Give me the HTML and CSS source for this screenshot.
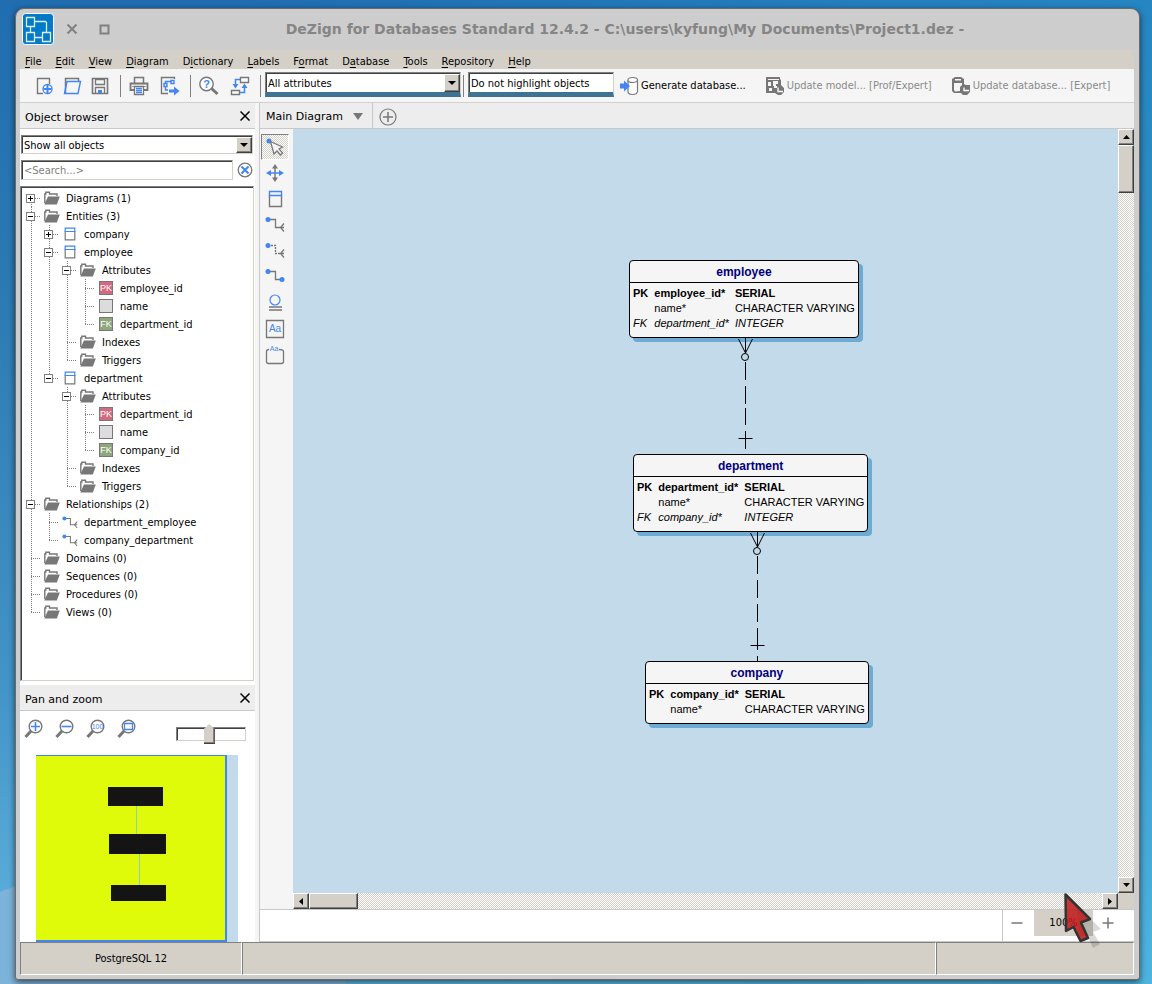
FILE: index.html
```
<!DOCTYPE html>
<html lang="en">
<head>
  <meta charset="UTF-8">
  <title>DeZign for Databases</title>
  <link rel="stylesheet" href="styles.css">
</head>
<body>
  <!-- shared icons -->
  <svg class="defs" width="0" height="0">
    <symbol id="folder" viewBox="0 0 16 14">
      <path d="M.8 12V3H1.800V1.200H5.500V3H13V5" fill="none" stroke="#777" stroke-width="1.400"/>
      <path d="M4 5.500H15.800L12.800 13.500H.3z" fill="#777"/>
    </symbol>
    <symbol id="entity" viewBox="0 0 12 14">
      <path d="M1.200 4V12.800H10.800V4" fill="none" stroke="#777" stroke-width="1.200"/>
      <path d="M1.200 1.200H10.800V4.500H1.200z" fill="#fff" stroke="#4285f4" stroke-width="1.200"/>
    </symbol>
    <symbol id="relation" viewBox="0 0 20 16">
      <path d="M3 3.500H10.500V11.500H16M19 7.500L15.500 11.500L19 15.500M16 11.500H19" fill="none" stroke="#777" stroke-width="1.300"/>
      <circle cx="3" cy="3.500" r="2.500" fill="#4285f4"/>
    </symbol>
    <symbol id="lens" viewBox="0 0 20 20">
      <path d="M7.500 11.500L1.500 18" stroke="#777" stroke-width="3"/>
      <circle cx="11.500" cy="7.500" r="6.300" fill="#fff" stroke="#777" stroke-width="1.400"/>
    </symbol>
  </svg>

  <div class="window">
    <header class="titlebar">
      <svg class="app-logo" width="32" height="32" viewBox="0 0 32 32">
        <rect x=".5" y=".5" width="31" height="31" rx="3" fill="#0479c8" stroke="#fff"/>
        <g fill="none" stroke="#d9ecf8" stroke-width="1.300">
          <path d="M4.500 4.500h8v9h-8zM4.500 19.500h8v9h-8zM20.500 19.500h8v9h-8zM12.500 8.500h11l1 1v10M8.500 13.500v6M12.500 24.500h8"/>
        </g>
      </svg>
      <button class="win-btn" aria-label="Close"><svg width="12" height="12"><path d="M1.500 1.500L10.500 10.500M10.500 1.500L1.500 10.500" stroke="#808080" stroke-width="2"/></svg></button>
      <button class="win-btn" aria-label="Maximize"><svg width="12" height="12"><path d="M2.500 2.500H10.500V10.500H2.500z" fill="none" stroke="#808080" stroke-width="2"/></svg></button>
      <h1>DeZign for Databases Standard 12.4.2 - C:\users\kyfung\My Documents\Project1.dez -</h1>
    </header>

    <div class="client">
      <nav class="menubar">
        <button><u>F</u>ile</button>
        <button><u>E</u>dit</button>
        <button><u>V</u>iew</button>
        <button><u>D</u>iagram</button>
        <button>D<u>i</u>ctionary</button>
        <button><u>L</u>abels</button>
        <button>F<u>o</u>rmat</button>
        <button>D<u>a</u>tabase</button>
        <button><u>T</u>ools</button>
        <button><u>R</u>epository</button>
        <button><u>H</u>elp</button>
      </nav>

      <div class="toolbar">
        <button class="tool" aria-label="New">
          <svg width="20" height="20" fill="none"><path d="M9 17.500H3.500V2.500H15.500V8" stroke="#777" stroke-width="1.400"/><circle cx="13.500" cy="13" r="4.500" fill="#fff" stroke="#4285f4" stroke-width="1.300"/><path d="M13.500 9V17M9.500 13H17.500" stroke="#4285f4" stroke-width="2"/></svg>
        </button>
        <button class="tool" aria-label="Open">
          <svg width="20" height="20" fill="none"><path d="M3.500 17V2.500H16.500V5" stroke="#777" stroke-width="1.500"/><path d="M5 5.500H18.500L16 17.500H2.500z" stroke="#4285f4" stroke-width="1.400"/></svg>
        </button>
        <button class="tool" aria-label="Save">
          <svg width="20" height="20" fill="none"><path d="M2.500 2.500H17.500V17.500H2.500z" stroke="#777" stroke-width="1.600"/><path d="M5.500 3.500H14.500V8.500H5.500zM5.500 17V11.500H14.500V17" stroke="#777" stroke-width="1.300"/><path d="M8 14H12V17H8z" fill="#4285f4"/></svg>
        </button>
        <span class="divider"></span>
        <button class="tool" aria-label="Print">
          <svg width="20" height="20" fill="none"><path d="M5.500 7V1.500H14.500V7" stroke="#777" stroke-width="1.500"/><path d="M5 14H1.500V7.500H18.500V14H15" stroke="#777" stroke-width="1.800"/><path d="M3 10.500H17" stroke="#999"/><path d="M5.500 10.500H14.500V18.500H5.500z" fill="#fff" stroke="#777" stroke-width="1.300"/><path d="M7 12.500H13M7 14.500H13M7 16.500H13" stroke="#4285f4" stroke-width="1.300"/></svg>
        </button>
        <button class="tool wide" aria-label="Export">
          <svg width="20" height="20" fill="none"><path d="M8 17.500H1.500V1.500H14.500V3" stroke="#777" stroke-width="1.400"/><path d="M4 7.500h3v3h-3zM11 4.500h3v3h-3zM5.500 7V5.500H10.500M5.500 11V14H8" stroke="#4285f4" stroke-width="1.400"/><path d="M9 13.500H14V10.500L19.500 15L14 19.500V16.500H9z" fill="#4285f4"/></svg>
        </button>
        <span class="divider"></span>
        <button class="tool" aria-label="Find">
          <svg width="20" height="20" fill="none"><path d="M12 12L18.500 18" stroke="#777" stroke-width="3"/><circle cx="7.500" cy="8" r="6.700" fill="#fff" stroke="#777" stroke-width="1.400"/><text x="7.500" y="12" class="icon-text bold">?</text></svg>
        </button>
        <button class="tool wide" aria-label="Arrange">
          <svg width="20" height="20" fill="none"><path d="M10.500 1.500H18.500V6.500H10.500zM1.500 14.500H9.500V18.500H1.500z" fill="#fff" stroke="#777" stroke-width="1.400"/><path d="M10 3.500H5.500V9M10 16.500H14.500V11" stroke="#4285f4" stroke-width="1.500"/><path d="M2.500 8H8.500L5.500 12.500zM11.500 12H17.500L14.500 7.500z" fill="#4285f4"/></svg>
        </button>
        <span class="divider narrow"></span>
        <div class="combo combo-attrs">
          <select aria-label="Display level"><option>All attributes</option></select>
          <span class="drop"></span>
        </div>
        <span class="divider narrow"></span>
        <div class="combo combo-highlight">
          <select aria-label="Highlight"><option>Do not highlight objects</option></select>
        </div>
        <button class="action">
          <svg width="20" height="20" fill="none"><path d="M9 4V15.500Q9 18.500 13.500 18.500T18.500 15.500V4" fill="#fff" stroke="#777" stroke-width="1.200"/><ellipse cx="13.700" cy="4" rx="4.800" ry="2.500" fill="#fff" stroke="#777" stroke-width="1.200"/><path d="M1 7.500H5V4.500L11 10L5 15.500V12.500H1z" fill="#4285f4"/></svg>
          Generate database...
        </button>
        <button class="action" disabled>
          <svg width="20" height="20"><path d="M1 1H15V3L16 4V9L19 12V16L16 19H13L10 17H1z" fill="#777"/><path d="M3 3H14V4H3zM3 6h3v4h-3zM8 5h5v3h-2v2h-3zM4 12h3v3h-3zM9 10h3v2h-3z" fill="#f5f5f5"/><path d="M18 15.500H13V11.500" fill="none" stroke="#fff" stroke-width="1.300"/></svg>
          Update model... [Prof/Expert]
        </button>
        <button class="action" disabled>
          <svg width="20" height="20"><path d="M1 3L4 1H10L13 3V8L15 9H19V16L16 19H12L10 17H3L1 15z" fill="#777"/><path d="M4 3H10V4.500H4zM3 7H11V9L9 11V15L4 15.500L3 14z" fill="#f5f5f5"/><path d="M18 14.500H13V11.500" fill="none" stroke="#fff" stroke-width="1.300"/></svg>
          Update database... [Expert]
        </button>
      </div>

      <div class="workspace">
        <aside class="sidebar">
          <div class="panel-head">
            <h2>Object browser</h2>
            <button aria-label="Close panel"><svg width="10" height="10"><path d="M.5 .5L9.500 9.500M9.500 .5L.5 9.500" stroke="#000" stroke-width="1.500"/></svg></button>
          </div>
          <div class="filters">
            <div class="combo combo-objects">
              <select aria-label="Object filter"><option>Show all objects</option></select>
              <span class="drop"></span>
            </div>
            <div class="search">
              <input type="text" placeholder="&lt;Search...&gt;" aria-label="Search">
              <button aria-label="Clear search"><svg width="16" height="16"><circle cx="8" cy="8" r="6.800" fill="#fff" stroke="#777" stroke-width="1.300"/><path d="M4.500 4.500L11.500 11.500M11.500 4.500L4.500 11.500" stroke="#4285f4" stroke-width="2"/></svg></button>
            </div>
          </div>

          <ul class="tree">
            <li><div class="row"><button class="toggle plus" aria-label="Expand"></button><svg class="ico"><use href="#folder"/></svg>Diagrams (1)</div></li>
            <li>
              <div class="row"><button class="toggle" aria-label="Collapse"></button><svg class="ico"><use href="#folder"/></svg>Entities (3)</div>
              <ul>
                <li><div class="row"><button class="toggle plus" aria-label="Expand"></button><svg class="ico"><use href="#entity"/></svg>company</div></li>
                <li>
                  <div class="row"><button class="toggle" aria-label="Collapse"></button><svg class="ico"><use href="#entity"/></svg>employee</div>
                  <ul>
                    <li>
                      <div class="row"><button class="toggle" aria-label="Collapse"></button><svg class="ico"><use href="#folder"/></svg>Attributes</div>
                      <ul>
                        <li><div class="row leaf"><span class="key pk">PK</span>employee_id</div></li>
                        <li><div class="row leaf"><span class="key"></span>name</div></li>
                        <li><div class="row leaf"><span class="key fk">FK</span>department_id</div></li>
                      </ul>
                    </li>
                    <li><div class="row leaf"><svg class="ico"><use href="#folder"/></svg>Indexes</div></li>
                    <li><div class="row leaf"><svg class="ico"><use href="#folder"/></svg>Triggers</div></li>
                  </ul>
                </li>
                <li>
                  <div class="row"><button class="toggle" aria-label="Collapse"></button><svg class="ico"><use href="#entity"/></svg>department</div>
                  <ul>
                    <li>
                      <div class="row"><button class="toggle" aria-label="Collapse"></button><svg class="ico"><use href="#folder"/></svg>Attributes</div>
                      <ul>
                        <li><div class="row leaf"><span class="key pk">PK</span>department_id</div></li>
                        <li><div class="row leaf"><span class="key"></span>name</div></li>
                        <li><div class="row leaf"><span class="key fk">FK</span>company_id</div></li>
                      </ul>
                    </li>
                    <li><div class="row leaf"><svg class="ico"><use href="#folder"/></svg>Indexes</div></li>
                    <li><div class="row leaf"><svg class="ico"><use href="#folder"/></svg>Triggers</div></li>
                  </ul>
                </li>
              </ul>
            </li>
            <li>
              <div class="row"><button class="toggle" aria-label="Collapse"></button><svg class="ico"><use href="#folder"/></svg>Relationships (2)</div>
              <ul>
                <li><div class="row leaf"><svg class="ico"><use href="#relation"/></svg>department_employee</div></li>
                <li><div class="row leaf"><svg class="ico"><use href="#relation"/></svg>company_department</div></li>
              </ul>
            </li>
            <li><div class="row leaf"><svg class="ico"><use href="#folder"/></svg>Domains (0)</div></li>
            <li><div class="row leaf"><svg class="ico"><use href="#folder"/></svg>Sequences (0)</div></li>
            <li><div class="row leaf"><svg class="ico"><use href="#folder"/></svg>Procedures (0)</div></li>
            <li><div class="row leaf"><svg class="ico"><use href="#folder"/></svg>Views (0)</div></li>
          </ul>

          <div class="panel-head">
            <h2>Pan and zoom</h2>
            <button aria-label="Close panel"><svg width="10" height="10"><path d="M.5 .5L9.500 9.500M9.500 .5L.5 9.500" stroke="#000" stroke-width="1.500"/></svg></button>
          </div>
          <div class="zoom-tools">
            <button aria-label="Zoom in"><svg width="20" height="20"><use href="#lens"/><path d="M7 7.500H16M11.500 3V12" stroke="#4285f4" stroke-width="1.600"/></svg></button>
            <button aria-label="Zoom out"><svg width="20" height="20"><use href="#lens"/><path d="M6.500 7.500H16.500" stroke="#4285f4" stroke-width="1.600"/></svg></button>
            <button aria-label="Zoom 100%"><svg width="20" height="20"><use href="#lens"/><text x="11.500" y="10" class="icon-text tiny">100</text></svg></button>
            <button aria-label="Fit"><svg width="20" height="20"><use href="#lens"/><path d="M7.500 4.500H15.500V10.500H7.500z" fill="none" stroke="#4285f4" stroke-width="1.300"/></svg></button>
            <input type="range" min="0" max="100" value="47" aria-label="Zoom level">
          </div>
          <div class="minimap">
            <svg viewBox="0 0 202 187" preserveAspectRatio="none">
              <rect width="202" height="187" fill="#c3daea"/>
              <rect width="191" height="187" fill="#4285f4"/>
              <rect y="1" width="189" height="184" fill="#e0fb09"/>
              <path d="M100.500 50V80M103.500 98V131" stroke="#8fcbc4"/>
              <path d="M72 32h55v19H72zM73 79h57v20H73zM75 130h55v16H75z" fill="#141414"/>
            </svg>
          </div>
        </aside>

        <main class="main">
          <div class="tabs">
            <button class="tab">Main Diagram <span class="caret"></span></button>
            <button class="add-tab" aria-label="Add diagram"><svg width="18" height="18"><circle cx="9" cy="9" r="8" fill="none" stroke="#777" stroke-width="1.200"/><path d="M4 9H14M9 4V14" stroke="#777" stroke-width="1.500"/></svg></button>
          </div>

          <div class="editor">
            <div class="palette">
              <button class="active" aria-label="Select"><svg width="20" height="20"><circle cx="4" cy="4" r="2.500" fill="#4285f4"/><path d="M5.500 4.500L17.500 10L14 12L17.500 16L15.500 18L12 14L9 17z" fill="#f5f5f5" stroke="#777" stroke-width="1.200"/></svg></button>
              <button aria-label="Pan"><svg width="20" height="20"><path d="M10 3V17" stroke="#777" stroke-width="1.500"/><path d="M7 5.500L10 1L13 5.500zM7 14.500L10 19L13 14.500z" fill="#777"/><path d="M3 10H17" stroke="#4285f4" stroke-width="1.500"/><path d="M6 7L1 10L6 13zM14 7L19 10L14 13z" fill="#4285f4"/></svg></button>
              <button aria-label="Entity"><svg width="20" height="20"><path d="M4.500 6V17.500H16.500V6" fill="none" stroke="#777" stroke-width="1.400"/><path d="M4.500 2.500H16.500V6.500H4.500z" fill="none" stroke="#4285f4" stroke-width="1.400"/></svg></button>
              <button aria-label="Identifying relationship"><svg width="20" height="20" viewBox="0 -1 20 20"><use href="#relation" width="20" height="16"/></svg></button>
              <button aria-label="Non-identifying relationship"><svg width="20" height="20" fill="none" stroke-width="1.300"><path d="M3 4.500H10.500V12.500H16" stroke="#777" stroke-dasharray="2 1"/><path d="M19 8.500L15.500 12.500L19 16.500M16 12.500H19" stroke="#777"/><circle cx="3" cy="4.500" r="2.500" fill="#4285f4"/></svg></button>
              <button aria-label="One to one"><svg width="20" height="20" fill="none"><path d="M3 4.500H10.500V12.500H16" stroke="#777" stroke-width="1.300"/><circle cx="3" cy="4.500" r="2.500" fill="#4285f4"/><circle cx="17" cy="12.500" r="2.500" fill="#4285f4"/></svg></button>
              <button aria-label="Subtype"><svg width="20" height="20" fill="none"><circle cx="10" cy="7" r="5" stroke="#4285f4" stroke-width="1.200"/><path d="M4 14H17M4 17H17" stroke="#777" stroke-width="1.400"/></svg></button>
              <button aria-label="Text"><svg width="20" height="20" fill="none"><path d="M1.500 1.500H18.500V18.500H1.500z" stroke="#777" stroke-width="1.300"/><text x="10" y="13" class="icon-text">Aa</text></svg></button>
              <button aria-label="Group"><svg width="20" height="24" viewBox="0 -3 20 24" fill="none"><path d="M4 3.500Q1.500 3.500 1.500 5.500V15.500Q1.500 17.500 3.500 17.500H16.500Q18.500 17.500 18.500 15.500V5.500Q18.500 3.500 14 3.500" stroke="#777" stroke-width="1.300"/><text x="9" y="5" class="icon-text tiny">Aa</text></svg></button>
            </div>

            <div class="view">
              <div class="canvas">
                <table class="entity employee">
                  <caption>employee</caption>
                  <tbody>
                    <tr class="primary"><td>PK</td><td>employee_id*</td><td>SERIAL</td></tr>
                    <tr><td></td><td>name*</td><td>CHARACTER VARYING</td></tr>
                    <tr class="foreign"><td>FK</td><td>department_id*</td><td>INTEGER</td></tr>
                  </tbody>
                </table>
                <table class="entity department">
                  <caption>department</caption>
                  <tbody>
                    <tr class="primary"><td>PK</td><td>department_id*</td><td>SERIAL</td></tr>
                    <tr><td></td><td>name*</td><td>CHARACTER VARYING</td></tr>
                    <tr class="foreign"><td>FK</td><td>company_id*</td><td>INTEGER</td></tr>
                  </tbody>
                </table>
                <table class="entity company">
                  <caption>company</caption>
                  <tbody>
                    <tr class="primary"><td>PK</td><td>company_id*</td><td>SERIAL</td></tr>
                    <tr><td></td><td>name*</td><td>CHARACTER VARYING</td></tr>
                  </tbody>
                </table>
                <svg class="links">
                  <g fill="none" stroke="#000">
                    <path d="M452.500 209V224M445.500 210L452.500 224L459.500 210M452.500 233V251M452.500 257V275M452.500 279V296M452.500 302V320M445.500 309.500H459.500"/>
                    <circle cx="452" cy="228" r="3.500"/>
                    <path d="M464.500 403V418M457.500 404L464.500 418L471.500 404M464.500 427V445M464.500 451V469M464.500 475V493M464.500 499V521M464.500 527V533M457.500 516.500H471.500"/>
                    <circle cx="464" cy="422" r="3.500"/>
                  </g>
                </svg>
              </div>
              <div class="scroll vertical">
                <button class="raised" aria-label="Up"><svg width="7" height="4"><path d="M0 4L3.500 0L7 4z"/></svg></button>
                <span class="raised thumb"></span>
                <button class="raised end" aria-label="Down"><svg width="7" height="4"><path d="M0 0L3.500 4L7 0z"/></svg></button>
              </div>
              <div class="scroll horizontal">
                <button class="raised" aria-label="Left"><svg width="4" height="7"><path d="M4 0L0 3.500L4 7z"/></svg></button>
                <span class="raised thumb"></span>
                <button class="raised end" aria-label="Right"><svg width="4" height="7"><path d="M0 0L4 3.500L0 7z"/></svg></button>
              </div>
              <div class="corner"></div>
            </div>
          </div>

          <div class="zoombar">
            <div class="zoom-ctl">
              <button aria-label="Zoom out"><svg width="12" height="12"><path d="M.5 6H11.500" stroke="#777" stroke-width="1.500"/></svg></button>
              <output>100%</output>
              <button aria-label="Zoom in"><svg width="12" height="12"><path d="M.5 6H11.500M6 .5V11.500" stroke="#777" stroke-width="1.500"/></svg></button>
            </div>
          </div>
        </main>
      </div>

      <footer class="statusbar">
        <span class="db">PostgreSQL 12</span>
        <span class="message"></span>
        <span class="extra"></span>
      </footer>
    </div>
  </div>

  <svg class="pointer" width="48" height="62" viewBox="0 0 48 62">
    <path d="M14 14L39 38L31 41L38 53L31 57L26 46L18 50z" fill="#000" opacity=".15"/>
    <path d="M3.500 3.500L28 28L19 31.500L26 47L18.500 50L11.500 36L4 40z" fill="#c01818" fill-opacity=".85" stroke="#333" stroke-width="2.500" stroke-linejoin="round"/>
  </svg>
</body>
</html>
```

FILE: styles.css
```
* {
  box-sizing: border-box;
}
body {
  margin: 0;
  height: 100vh;
  padding: 8px 12px 4px 15px;
  overflow: hidden;
  font-family: 'DejaVu Sans Condensed', 'DejaVu Sans', sans-serif;
  font-size: 11px;
  color: #000;
  background:
    linear-gradient(160deg, transparent 5px, #7db2da 6px) 0 100% / 30% 98px no-repeat,
    linear-gradient(to right, transparent 20%, #30b0e060 100%),
    linear-gradient(#206db0, #2c7ab3 30%, #4394c8 70%, #62b6e0);
}
button {
  padding: 0;
  border: none;
  background: none;
  font: inherit;
  color: inherit;
}
svg {
  display: block;
  flex: none;
}
.defs {
  position: absolute;
}
.icon-text {
  font: 10px 'Liberation Sans', sans-serif;
  fill: #4285f4;
  text-anchor: middle;
}
.icon-text.bold {
  font-weight: bold;
  font-size: 11px;
}
.icon-text.tiny {
  font-size: 7px;
}

/* window frame */
.window {
  display: flex;
  flex-direction: column;
  height: 100%;
  padding: 0 5px 4px 4px;
  border: 1px solid #6b6b6b;
  border-radius: 9px 9px 3px 3px;
  background: #cdcdcd;
  box-shadow: 0 2px 6px rgba(0, 0, 0, 0.6);
}
.titlebar {
  display: flex;
  align-items: center;
  gap: 20px;
  height: 41px;
  padding: 0 14px 2px 2px;
}
.app-logo {
  margin-right: -8px;
}
.titlebar h1 {
  flex: 1;
  margin: 0;
  font: bold 14px 'DejaVu Sans', sans-serif;
  color: #858585;
  text-align: center;
}
.client {
  flex: 1;
  min-height: 0;
  display: flex;
  flex-direction: column;
  background: #f5f5f5;
}

/* menu */
.menubar {
  display: flex;
  gap: 14px;
  height: 19px;
  padding: 4px 5px 0;
  background: #d4d0c8;
  line-height: 15px;
}
.menubar u {
  text-underline-offset: 2px;
}

/* toolbar */
.toolbar {
  display: flex;
  align-items: center;
  height: 34px;
  padding-left: 14px;
  border-bottom: 1px solid #d0d0d0;
  white-space: nowrap;
}
.tool {
  width: 28px;
  display: flex;
  flex: none;
}
.tool.wide {
  margin-left: 3px;
}
.divider {
  flex: none;
  width: 1px;
  height: 22px;
  margin: 0 8px 0 2px;
  background: #808080;
}
.divider.narrow {
  margin: 0 4px 0 2px;
}
.combo,
.search input {
  border: 1px solid;
  border-color: #808080 #d4d0c8 #d4d0c8 #808080;
  box-shadow: inset 1px 1px 0 #404040;
  background: #fff;
}
.combo {
  display: flex;
  height: 19px;
  padding: 1px 0 0 1px;
}
.combo select {
  flex: 1;
  min-width: 0;
  padding: 0 1px;
  border: none;
  appearance: none;
  background: none;
  font: inherit;
  color: #000;
}
.toolbar .combo {
  flex: none;
  height: 25px;
  margin-top: -2px;
  border-bottom: 5px solid #3f7394;
}
.combo-attrs {
  width: 196px;
}
.combo-highlight {
  width: 146px;
}
.drop,
.raised {
  display: flex;
  align-items: center;
  justify-content: center;
  border: 1px solid;
  border-color: #fff #404040 #404040 #fff;
  box-shadow: inset -1px -1px 0 #808080;
  background: #d4d0c8;
}
.drop {
  width: 16px;
}
.drop::before {
  content: "";
  border: 4px solid transparent;
  border-top-color: #000;
  border-bottom: none;
}
.action {
  display: flex;
  align-items: center;
  gap: 2px;
  margin-left: 5px;
}
.action + .action {
  margin-left: 19px;
}
.action:disabled {
  color: #8a8a8a;
}

/* sidebar */
.workspace {
  flex: 1;
  min-height: 0;
  display: flex;
}
.sidebar {
  flex: none;
  width: 235px;
  display: flex;
  flex-direction: column;
  background: #fff;
}
.panel-head {
  display: flex;
  align-items: center;
  justify-content: space-between;
  height: 26px;
  padding: 0 5px;
  border-bottom: 1px solid #c8c8c8;
  background: #ededed;
}
.panel-head h2 {
  margin: 0;
  padding-top: 3px;
  font: 11px 'DejaVu Sans', sans-serif;
}
.filters {
  display: flex;
  flex-direction: column;
  gap: 6px;
  padding: 6px 2px 6px 1px;
}
.search {
  display: flex;
  gap: 4px;
}
.search input {
  flex: 1;
  min-width: 0;
  height: 20px;
  padding: 0 2px;
  font: inherit;
}
.search input::placeholder {
  color: #808080;
}
.tree {
  flex: 1;
  min-height: 0;
  padding: 2px 0 0 1px;
  border: 1px solid;
  border-color: #808080 #d4d0c8 #d4d0c8 #808080;
  box-shadow: inset 1px 1px 0 #404040;
  margin: 0 1px 4px 0;
}
.tree,
.tree ul {
  list-style: none;
}
.tree ul {
  margin: 0;
  padding-left: 18px;
}
.tree li {
  background: repeating-linear-gradient(#808080 0 1px, transparent 1px 2px) 9px 0 / 1px 100% no-repeat;
}
.tree li:last-child {
  background-size: 1px 10px;
}
.tree > li:first-child {
  background-position: 9px 9px;
}
.row {
  display: flex;
  align-items: center;
  height: 18px;
  padding-left: 4px;
  background: repeating-linear-gradient(to right, #808080 0 1px, transparent 1px 2px) 9px 9px / 10px 1px no-repeat;
}
.row.leaf {
  padding-left: 18px;
}
.toggle {
  flex: none;
  width: 9px;
  height: 9px;
  margin-right: 5px;
  border: 1px solid #808080;
  background: linear-gradient(#000, #000) 1px 3px / 5px 1px no-repeat #fff;
}
.toggle.plus {
  background:
    linear-gradient(#000, #000) 1px 3px / 5px 1px no-repeat,
    linear-gradient(#000, #000) 3px 1px / 1px 5px no-repeat #fff;
}
.ico {
  width: 16px;
  height: 14px;
  margin: 0 6px 0 4px;
}
.key {
  width: 14px;
  height: 14px;
  margin: 0 7px 0 5px;
  border: 1px solid #777;
  background: #dcdcdc;
  color: #fff;
  font: 9px/12px 'Liberation Sans', sans-serif;
  text-align: center;
}
.key.pk {
  background: #d36a80;
}
.key.fk {
  background: #8fa77d;
}

/* pan and zoom */
.zoom-tools {
  display: flex;
  align-items: center;
  gap: 11px;
  height: 44px;
  padding: 0 9px 8px 4px;
}
.zoom-tools input {
  appearance: none;
  width: 70px;
  height: 14px;
  margin: 10px 0 0 auto;
  border: 1px solid;
  border-color: #808080 #d4d0c8 #d4d0c8 #808080;
  box-shadow: inset 1px 1px 0 #404040;
  background: #fff;
}
.zoom-tools input::-webkit-slider-thumb {
  appearance: none;
  width: 11px;
  height: 20px;
  border: solid #404040;
  border-width: 0 1px 1px 0;
  box-shadow: inset -1px -1px 0 #808080;
  background: #d4d0c8;
  clip-path: polygon(50% 0, 100% 25%, 100% 100%, 0 100%, 0 25%);
}
.minimap {
  padding: 0 17px 0 16px;
}
.minimap svg {
  width: 100%;
  height: 187px;
}

/* diagram area */
.main {
  flex: 1;
  min-width: 0;
  display: flex;
  flex-direction: column;
  margin-left: 4px;
  border-left: 1px solid #c8c8c8;
}
.tabs {
  display: flex;
  height: 26px;
  border-bottom: 1px solid #c8c8c8;
  background: #ededed;
}
.tab {
  display: flex;
  align-items: center;
  gap: 10px;
  padding: 2px 9px 0 6px;
  border-right: 1px solid #c8c8c8;
  font-family: 'DejaVu Sans', sans-serif;
}
.caret {
  border: 5px solid transparent;
  border-top: 7px solid #777;
  border-bottom: none;
}
.add-tab {
  margin-left: 6px;
  padding-top: 2px;
}
.editor {
  flex: 1;
  min-height: 0;
  display: flex;
}
.palette {
  flex: none;
  width: 33px;
  padding: 5px 0 0 1px;
}
.palette button {
  display: flex;
  align-items: center;
  justify-content: center;
  width: 28px;
  height: 26px;
}
.palette .active {
  border: 1px solid;
  border-color: #808080 #fff #fff #808080;
}
.palette .active,
.scroll {
  background: conic-gradient(#d4d0c8 25%, #fff 0 50%, #d4d0c8 0 75%, #fff 0) 0 0 / 2px 2px;
}
.view {
  flex: 1;
  min-width: 0;
  display: grid;
  grid-template-columns: 1fr 16px;
  grid-template-rows: 1fr 16px;
}
.canvas {
  position: relative;
  overflow: hidden;
  background: #c3daea;
}
.links {
  position: absolute;
  inset: 0;
  width: 100%;
  height: 100%;
}
.scroll {
  display: flex;
}
.scroll.vertical {
  flex-direction: column;
}
.scroll button {
  width: 16px;
  height: 16px;
}
.scroll .end {
  margin-top: auto;
}
.horizontal .end {
  margin: 0 0 0 auto;
}
.vertical .thumb {
  height: 48px;
}
.horizontal .thumb {
  width: 49px;
}
.corner {
  background: #d4d0c8;
}

/* entity boxes */
.entity {
  position: absolute;
  border: 1px solid #000;
  border-radius: 4px;
  border-spacing: 0;
  background: #f5f5f5;
  box-shadow: 4px 4px 0 #6eaad1;
  font: 11px/15px 'Liberation Sans', sans-serif;
  white-space: nowrap;
  padding: 25px 3px 6px;
}
.entity caption {
  height: 23px;
  margin-bottom: -23px;
  border-bottom: 1px solid #000;
  font-size: 12px;
  font-weight: bold;
  line-height: 24px;
  color: #000080;
}
.entity td {
  height: 15px;
  padding: 0 6px 0 0;
}
.entity td:last-child {
  padding: 0;
}
.primary {
  font-weight: bold;
}
.foreign {
  font-style: italic;
}
.employee {
  left: 336px;
  top: 131px;
}
.department {
  left: 340px;
  top: 325px;
}
.company {
  left: 352px;
  top: 532px;
}

/* bottom bars */
.zoombar {
  display: flex;
  justify-content: flex-end;
  height: 33px;
  border-top: 1px solid #c8c8c8;
  border-bottom: 1px solid #c8c8c8;
  background: #fff;
}
.zoom-ctl {
  display: flex;
  align-items: flex-start;
  width: 132px;
  border-left: 1px solid #c8c8c8;
  padding-left: 8px;
  gap: 9px;
}
.zoom-ctl button {
  padding-top: 7px;
}
.zoom-ctl output {
  width: 59px;
  margin-left: 2px;
  background: #d4d0c8;
  line-height: 26px;
  text-align: center;
}
.statusbar {
  display: flex;
  height: 33px;
  background: #d4d0c8;
  line-height: 32px;
  text-align: center;
}
.statusbar span {
  border: 1px solid;
  border-color: #808080 #fff #fff #808080;
}
.db {
  width: 222px;
}
.message {
  flex: 1;
}
.extra {
  width: 198px;
}
.pointer {
  position: absolute;
  left: 1062px;
  top: 891px;
}
```
